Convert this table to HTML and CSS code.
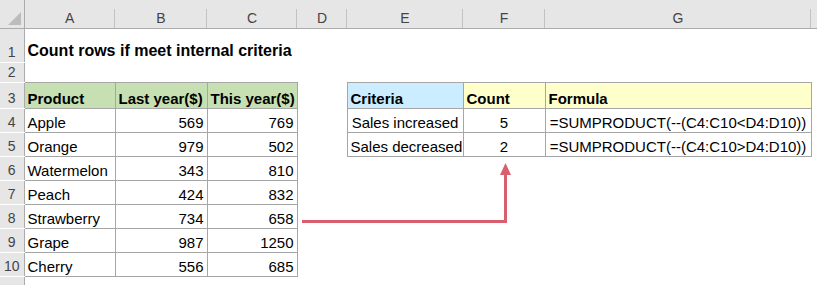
FILE: index.html
```html
<!DOCTYPE html>
<html lang="en">
<head>
  <title>Count rows if meet internal criteria</title>
  <link rel="stylesheet" href="styles.css">
</head>
<body>
  <div class="wrap">
    <table class="sheet">
      <colgroup>
        <col class="c-hd">
        <col class="c-a">
        <col class="c-b">
        <col class="c-c">
        <col class="c-d">
        <col class="c-e">
        <col class="c-f">
        <col class="c-g">
        <col class="c-rest">
      </colgroup>
      <thead>
        <tr>
          <th class="corner">
            <svg width="14" height="14" viewBox="0 0 14 14"><polygon points="13,0 13,13 0,13" fill="#bcbcbc"/></svg>
          </th>
          <th>A</th>
          <th>B</th>
          <th>C</th>
          <th>D</th>
          <th>E</th>
          <th>F</th>
          <th>G</th>
          <th class="rest"></th>
        </tr>
      </thead>
      <tbody>
        <tr class="r-title">
          <th>1</th>
          <td colspan="8" class="title">Count rows if meet internal criteria</td>
        </tr>
        <tr class="r-gap">
          <th>2</th>
          <td colspan="8"></td>
        </tr>
        <tr class="r-head">
          <th>3</th>
          <td class="box green">Product</td>
          <td class="box green">Last year($)</td>
          <td class="box green">This year($)</td>
          <td></td>
          <td class="box blue">Criteria</td>
          <td class="box yellow">Count</td>
          <td class="box yellow">Formula</td>
          <td></td>
        </tr>
        <tr>
          <th>4</th>
          <td class="box">Apple</td>
          <td class="box num">569</td>
          <td class="box num">769</td>
          <td></td>
          <td class="box mid">Sales increased</td>
          <td class="box mid">5</td>
          <td class="box mid">=SUMPRODUCT(--(C4:C10&lt;D4:D10))</td>
          <td></td>
        </tr>
        <tr>
          <th>5</th>
          <td class="box">Orange</td>
          <td class="box num">979</td>
          <td class="box num">502</td>
          <td></td>
          <td class="box mid">Sales decreased</td>
          <td class="box mid">2</td>
          <td class="box mid">=SUMPRODUCT(--(C4:C10&gt;D4:D10))</td>
          <td></td>
        </tr>
        <tr>
          <th>6</th>
          <td class="box">Watermelon</td>
          <td class="box num">343</td>
          <td class="box num">810</td>
          <td colspan="5"></td>
        </tr>
        <tr>
          <th>7</th>
          <td class="box">Peach</td>
          <td class="box num">424</td>
          <td class="box num">832</td>
          <td colspan="5"></td>
        </tr>
        <tr>
          <th>8</th>
          <td class="box">Strawberry</td>
          <td class="box num">734</td>
          <td class="box num">658</td>
          <td colspan="5"></td>
        </tr>
        <tr>
          <th>9</th>
          <td class="box">Grape</td>
          <td class="box num">987</td>
          <td class="box num">1250</td>
          <td colspan="5"></td>
        </tr>
        <tr>
          <th>10</th>
          <td class="box">Cherry</td>
          <td class="box num">556</td>
          <td class="box num">685</td>
          <td colspan="5"></td>
        </tr>
        <tr>
          <th>11</th>
          <td colspan="8"></td>
        </tr>
      </tbody>
    </table>

    <!-- arrow from the strawberry row up to the count cell -->
    <svg class="arrow" width="817" height="285" viewBox="0 0 817 285">
      <polyline points="302,221.5 505.5,221.5 505.5,172" fill="none" stroke="#d95f6e" stroke-width="3"/>
      <polygon points="500,175 511,175 505.5,163" fill="#d95f6e"/>
    </svg>
  </div>
</body>
</html>
```

FILE: styles.css
```css
body {
  margin: 0;
  padding: 0;
  background-color: #fff;
  font-family: "Liberation Sans", Arial, sans-serif;
  color: #000;
}
.wrap {
  position: relative;
  width: 817px;
  height: 285px;
  overflow: hidden;
}
.sheet {
  border-collapse: collapse;
  table-layout: fixed;
  width: 817px;
}
.c-hd { width: 24px; }
.c-a { width: 91px; }
.c-b { width: 92px; }
.c-c { width: 90px; }
.c-d { width: 50px; }
.c-e { width: 116px; }
.c-f { width: 82px; }
.c-g { width: 266px; }
.c-rest { width: 6px; }

/* column letters */
.sheet thead th {
  height: 28px;
  padding: 9px 0 0;
  box-sizing: border-box;
  background: linear-gradient(#c2c2c2, #c2c2c2) right bottom / 1px 19px no-repeat, #e6e6e6;
  border-bottom: 1px solid #ababab;
  font-size: 14px;
  font-weight: normal;
  color: #444;
  line-height: 18px;
  vertical-align: middle;
}
.sheet thead th.corner {
  background: #e6e6e6;
  border-right: 1px solid #ababab;
  padding: 0;
  text-align: right;
  vertical-align: bottom;
}
.corner svg {
  display: block;
  margin: 0 2px 2px auto;
}
.sheet thead th.rest {
  background: #e6e6e6;
}

/* row numbers */
.sheet tbody th {
  background-color: #e6e6e6;
  border-right: 1px solid #ababab;
  border-bottom: 1px solid #fff;
  font-size: 14px;
  font-weight: normal;
  color: #444;
  text-align: center;
  vertical-align: bottom;
  padding: 0 0 2px;
  line-height: 16px;
}
.sheet tbody tr { height: 24px; }
.sheet tbody tr.r-title { height: 34px; }
.sheet tbody tr.r-gap { height: 20px; }
.sheet tbody tr.r-head { height: 26px; }

.sheet td {
  padding: 0 3px 1px;
  font-size: 15px;
  line-height: 17px;
  vertical-align: bottom;
  white-space: nowrap;
  overflow: hidden;
}
.sheet td.title {
  font-size: 16px;
  font-weight: bold;
  padding-bottom: 3px;
}
.box {
  border: 1px solid #a6a6a6;
}
.num { text-align: right; }
.mid { text-align: center; }
.r-head td {
  font-weight: bold;
}
.green { background-color: #c6e0b4; }
.blue { background-color: #ccecff; }
.yellow { background-color: #ffffcc; }

.arrow {
  position: absolute;
  left: 0;
  top: 0;
  pointer-events: none;
}
```
